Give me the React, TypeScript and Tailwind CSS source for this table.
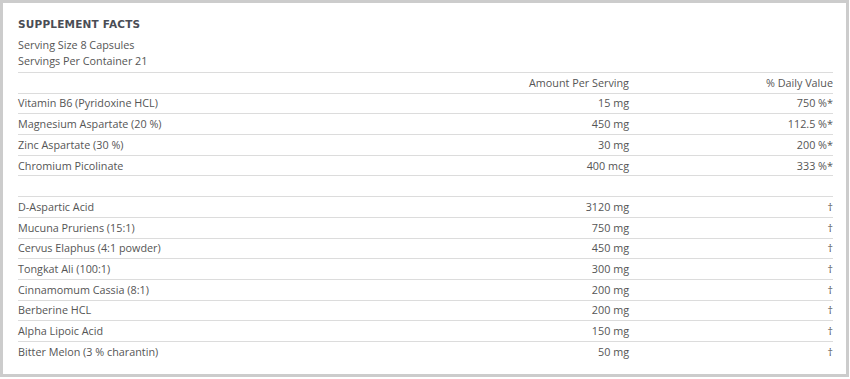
const vitamins = [
  { name: 'Vitamin B6 (Pyridoxine HCL)', amount: '15 mg', dv: '750 %*' },
  { name: 'Magnesium Aspartate (20 %)', amount: '450 mg', dv: '112.5 %*' },
  { name: 'Zinc Aspartate (30 %)', amount: '30 mg', dv: '200 %*' },
  { name: 'Chromium Picolinate', amount: '400 mcg', dv: '333 %*' },
];

const blend = [
  { name: 'D-Aspartic Acid', amount: '3120 mg' },
  { name: 'Mucuna Pruriens (15:1)', amount: '750 mg' },
  { name: 'Cervus Elaphus (4:1 powder)', amount: '450 mg' },
  { name: 'Tongkat Ali (100:1)', amount: '300 mg' },
  { name: 'Cinnamomum Cassia (8:1)', amount: '200 mg' },
  { name: 'Berberine HCL', amount: '200 mg' },
  { name: 'Alpha Lipoic Acid', amount: '150 mg' },
  { name: 'Bitter Melon (3 % charantin)', amount: '50 mg' },
];

const Row = ({ name, amount, dv, last }: { name: string; amount: string; dv: string; last?: boolean }) => (
  <div
    className={`grid grid-cols-[1fr_200px_204px] items-center h-[20.7px] ${
      last ? '' : 'border-b border-[#dcdcdc]'
    }`}
  >
    <span>{name}</span>
    <span className="text-right">{amount}</span>
    <span className="text-right">{dv}</span>
  </div>
);

export default function App() {
  return (
    <div className="w-[849px] h-[377px] border-[3px] border-[#cccccc] bg-white pl-[15px] pr-[13px] pt-[14px]">
      <h2 className="text-[10.5px] leading-[14px] font-bold tracking-[0.2px] text-[#4a4d55] font-['DejaVu_Sans',sans-serif]">
        SUPPLEMENT FACTS
      </h2>
      <div className="mt-[6px] text-[10.8px] text-[#555] font-['Open_Sans',sans-serif]">
        <div className="leading-[16px]">Serving Size 8 Capsules</div>
        <div className="leading-[16px] pb-[3px] border-b border-[#dcdcdc]">Servings Per Container 21</div>
        <Row name="" amount="Amount Per Serving" dv="% Daily Value" />
        {vitamins.map((v) => (
          <Row key={v.name} name={v.name} amount={v.amount} dv={v.dv} />
        ))}
        <Row name="" amount="" dv="" />
        {blend.map((b, i) => (
          <Row key={b.name} name={b.name} amount={b.amount} dv="†" last={i === blend.length - 1} />
        ))}
      </div>
    </div>
  );
}
